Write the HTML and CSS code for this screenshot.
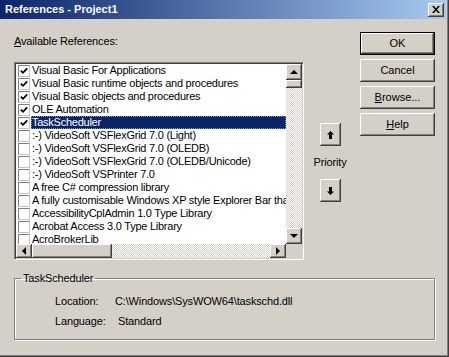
FILE: index.html
```html
<!DOCTYPE html>
<html lang="en">
	<head>
		<meta charset="UTF-8" />
		<title>References - Project1</title>
		<link rel="stylesheet" href="styles.css">
	</head>
	<body>
		<div class="window">
			<div class="titlebar">
				<span class="title">References - Project1</span>
				<button class="close" title="Close">
					<svg width="8" height="7" viewBox="0 0 8 7"><path d="M0 0h2l2 2.5L6 0h2L5 3.5 8 7H6L4 4.5 2 7H0l3-3.5z" fill="#000"/></svg>
				</button>
			</div>

			<div class="client">
				<div class="top">
					<div class="left">
						<div class="label"><u>A</u>vailable References:</div>
						<div class="list">
							<div class="rows" id="rows"></div>
							<div class="vscroll">
								<span class="sbtn"><i class="tri tri-up"></i></span>
								<span class="vthumb"></span>
								<span class="track"></span>
								<span class="sbtn"><i class="tri tri-down"></i></span>
							</div>
							<div class="hscroll">
								<span class="sbtn"><i class="tri tri-left"></i></span>
								<span class="hthumb"></span>
								<span class="track"></span>
								<span class="sbtn"><i class="tri tri-right"></i></span>
							</div>
							<div class="corner"></div>
						</div>
					</div>

					<div class="priority">
						<button class="btn arrow-btn">
							<svg width="7" height="8" viewBox="0 0 7 8"><path d="M3.5 0L7 3.5H5V8H2V3.5H0z" fill="#000"/></svg>
						</button>
						<span class="priority-label">Priority</span>
						<button class="btn arrow-btn">
							<svg width="7" height="8" viewBox="0 0 7 8"><path d="M3.5 8L7 4.5H5V0H2V4.5H0z" fill="#000"/></svg>
						</button>
					</div>

					<div class="buttons">
						<button class="btn default">OK</button>
						<button class="btn">Cancel</button>
						<button class="btn browse"><u>B</u>rowse...</button>
						<button class="btn help"><u>H</u>elp</button>
					</div>
				</div>

				<fieldset class="group">
					<legend>TaskScheduler</legend>
					<div class="info">
						<span>Location:</span>
						<span>C:\Windows\SysWOW64\taskschd.dll</span>
						<span>Language:</span>
						<span class="lang">Standard</span>
					</div>
				</fieldset>
			</div>
		</div>

		<script>
			const refs = [
				['Visual Basic For Applications', true],
				['Visual Basic runtime objects and procedures', true],
				['Visual Basic objects and procedures', true],
				['OLE Automation', true],
				['TaskScheduler', true, true],
				[':-) VideoSoft VSFlexGrid 7.0 (Light)'],
				[':-) VideoSoft VSFlexGrid 7.0 (OLEDB)'],
				[':-) VideoSoft VSFlexGrid 7.0 (OLEDB/Unicode)'],
				[':-) VideoSoft VSPrinter 7.0'],
				['A free C# compression library'],
				['A fully customisable Windows XP style Explorer Bar that supports Windows XP themes'],
				['AccessibilityCplAdmin 1.0 Type Library'],
				['Acrobat Access 3.0 Type Library'],
				['AcroBrokerLib']
			];

			const check = '<svg width="8" height="8" viewBox="0 0 8 8"><path d="M0.8 3.6L3 5.8 7.2 1.4" fill="none" stroke="#000" stroke-width="1.8"/></svg>';
			const rows = document.getElementById('rows');
			rows.innerHTML = refs.map(([name, checked, selected]) => `
				<div class="row">
					<span class="checkbox">${checked ? check : ''}</span>
					<span class="name${selected ? ' selected' : ''}">${name}</span>
				</div>`).join('');
		</script>
	</body>
</html>
```

FILE: styles.css
```css
* { margin: 0; padding: 0; box-sizing: border-box; }
body {
	font-family: "Liberation Sans", Arial, sans-serif;
	font-size: 11px;
	line-height: 13px;
	color: #000;
	background: #d4d0c8;
}
.window {
	width: 449px;
	height: 357px;
	padding: 0 3px 3px 0;
	background: #d4d0c8;
	box-shadow: inset -1px -1px #404040, inset -2px -2px #808080;
	display: flex;
	flex-direction: column;
}
.titlebar {
	height: 19px;
	display: flex;
	align-items: center;
	justify-content: space-between;
	padding: 0 2px 0 5px;
	background: linear-gradient(to right, #0a246a, #a6caf0);
}
.title {
	color: #fff;
	font-weight: bold;
}
button {
	font: inherit;
	color: inherit;
	border: none;
	background: #d4d0c8;
}
.close, .btn, .sbtn {
	box-shadow: inset -1px -1px #404040, inset 1px 1px #fff, inset -2px -2px #808080, inset 2px 2px #d4d0c8;
}
.close {
	width: 16px;
	height: 14px;
	display: flex;
	align-items: center;
	justify-content: center;
	padding-bottom: 1px;
}
.client {
	flex: 1;
	padding: 13px 11px 0 14px;
	letter-spacing: -0.15px;
}
.top {
	display: flex;
}
.left {
	width: 290px;
}
.label {
	margin-top: 3px;
	margin-bottom: 14px;
}
.list {
	height: 198px;
	background: #fff;
	border: 1px solid;
	border-color: #808080 #fff #fff #808080;
	box-shadow: inset 1px 1px #404040, inset -1px -1px #d4d0c8;
	padding: 1px;
	display: grid;
	grid-template-columns: 1fr 16px;
	grid-template-rows: 1fr 14px;
}
.rows {
	overflow: hidden;
}
.row {
	height: 13px;
	display: flex;
	align-items: center;
	padding-left: 2px;
}
.checkbox {
	width: 12px;
	height: 12px;
	flex: none;
	border: 1px solid;
	border-color: #808080 #c8c4bc #c8c4bc #808080;
	background: #fff;
	display: flex;
	align-items: center;
	justify-content: center;
}
.name {
	flex: 1;
	margin-left: 1px;
	padding: 0 1px;
	white-space: nowrap;
	overflow: hidden;
	letter-spacing: -0.25px;
}
.selected {
	background: #0a246a;
	color: #fff;
	outline: 1px dotted #8a94b8;
	outline-offset: -1px;
}
.vscroll {
	display: flex;
	flex-direction: column;
}
.hscroll {
	display: flex;
}
.sbtn {
	width: 16px;
	height: 16px;
	flex: none;
	background: #d4d0c8;
	display: flex;
	align-items: center;
	justify-content: center;
}
.hscroll .sbtn {
	height: 14px;
}
.track {
	flex: 1;
	background: repeating-conic-gradient(#d4d0c8 0 25%, #fff 0 50%) 0 0 / 2px 2px;
}
.vthumb, .hthumb {
	flex: none;
	background: #d4d0c8;
	box-shadow: inset -1px -1px #404040, inset 1px 1px #fff, inset -2px -2px #808080, inset 2px 2px #d4d0c8;
}
.vthumb { height: 8px; }
.hthumb { width: 80px; }
.corner { background: #d4d0c8; }
.tri {
	width: 0;
	height: 0;
	border: 4px solid transparent;
}
.tri-up { border-bottom-color: #000; border-top-width: 0; margin-bottom: 1px; }
.tri-down { border-top-color: #000; border-bottom-width: 0; }
.tri-left { border-right-color: #000; border-left-width: 0; }
.tri-right { border-left-color: #000; border-right-width: 0; }
.priority {
	width: 56px;
	display: flex;
	flex-direction: column;
	align-items: center;
	padding: 91px 4px 0 0;
}
.arrow-btn {
	width: 21px;
	height: 22px;
	display: flex;
	align-items: center;
	justify-content: center;
	margin-left: 1px;
}
.priority-label {
	margin: 10px 0;
}
.buttons {
	width: 75px;
	display: flex;
	flex-direction: column;
	letter-spacing: 0;
}
.btn {
	height: 23px;
}
.buttons .btn + .btn {
	margin-top: 4px;
}
.buttons .browse {
	margin-top: 13px;
}
.buttons .help {
	margin-top: 41px;
}
.default {
	border: 1px solid #000;
	box-shadow: inset -1px -1px #404040, inset 1px 1px #fff, inset -2px -2px #808080;
}
.group {
	margin-top: 12px;
	border: 1px solid #808080;
	box-shadow: inset 1px 1px #fff, 1px 1px #fff;
	padding: 10px 0;
	height: 68px;
}
.group legend {
	margin-left: 6px;
	padding: 0 2px;
}
.info {
	display: grid;
	grid-template-columns: 60px 1fr;
	row-gap: 7px;
	padding-left: 40px;
}
.lang {
	padding-left: 3px;
}
```
